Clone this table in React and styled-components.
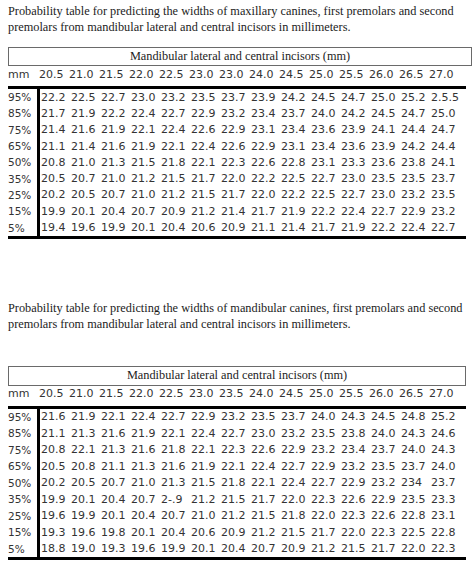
import React from "react";
import styled, { createGlobalStyle } from "styled-components";

const GlobalStyle = createGlobalStyle`
  html, body {
    margin: 0;
    padding: 0;
    background: #fff;
  }
`;

const Page = styled.div`
  width: 474px;
  height: 566px;
  overflow: hidden;
  padding: 0 0 0 8px;
  box-sizing: border-box;
`;

const Caption = styled.p`
  margin: 0;
  padding-top: ${(props) => props.top}px;
  font-family: "Liberation Serif", "Times New Roman", serif;
  font-size: 12.3px;
  line-height: 16px;
  color: #1c1c1c;
  white-space: nowrap;
`;

const TableWrap = styled.div`
  margin-top: ${(props) => props.top}px;
  width: 458px;
`;

const HeadBox = styled.div`
  width: ${(props) => props.boxWidth}px;
  height: ${(props) => props.boxHeight}px;
  box-sizing: border-box;
  border: 1px solid #6a6a6a;
  display: flex;
  align-items: center;
  justify-content: center;
  font-family: "Liberation Serif", "Times New Roman", serif;
  font-size: 12.3px;
  color: #1c1c1c;
`;

const ColumnRow = styled.div`
  display: grid;
  grid-template-columns: 31px repeat(14, 30px);
  height: 16px;
  align-items: center;
  font-family: "DejaVu Sans", Verdana, sans-serif;
  font-size: 11px;
  color: #333;
`;

const Body = styled.div`
  margin-top: ${(props) => props.gap}px;
  display: grid;
  grid-template-columns: 29px 1fr;
  border-top: 3px solid #000;
  border-bottom: 3px solid #000;
`;

const Labels = styled.div`
  display: flex;
  flex-direction: column;
`;

const Values = styled.div`
  border-left: 3px solid #000;
  padding-left: 1px;
  display: flex;
  flex-direction: column;
`;

const DataRow = styled.div`
  display: grid;
  grid-template-columns: repeat(14, 30px);
  height: ${(props) => props.rowHeight}px;
  align-items: center;
`;

const Cell = styled.span`
  font-family: "DejaVu Sans", Verdana, sans-serif;
  font-size: 11px;
  color: #333;
  white-space: nowrap;
`;

const Label = styled(Cell)`
  height: ${(props) => props.rowHeight}px;
  display: flex;
  align-items: center;
  font-size: 10.5px;
`;

const headers = [
  "20.5", "21.0", "21.5", "22.0", "22.5", "23.0", "23.0",
  "24.0", "24.5", "25.0", "25.5", "26.0", "26.5", "27.0",
];
const headers2 = [
  "20.5", "21.0", "21.5", "22.0", "22.5", "23.0", "23.5",
  "24.0", "24.5", "25.0", "25.5", "26.0", "26.5", "27.0",
];

const levels = ["95%", "85%", "75%", "65%", "50%", "35%", "25%", "15%", "5%"];

const maxillary = [
  "22.2 22.5 22.7 23.0 23.2 23.5 23.7 23.9 24.2 24.5 24.7 25.0 25.2 2.5.5",
  "21.7 21.9 22.2 22.4 22.7 22.9 23.2 23.4 23.7 24.0 24.2 24.5 24.7 25.0",
  "21.4 21.6 21.9 22.1 22.4 22.6 22.9 23.1 23.4 23.6 23.9 24.1 24.4 24.7",
  "21.1 21.4 21.6 21.9 22.1 22.4 22.6 22.9 23.1 23.4 23.6 23.9 24.2 24.4",
  "20.8 21.0 21.3 21.5 21.8 22.1 22.3 22.6 22.8 23.1 23.3 23.6 23.8 24.1",
  "20.5 20.7 21.0 21.2 21.5 21.7 22.0 22.2 22.5 22.7 23.0 23.5 23.5 23.7",
  "20.2 20.5 20.7 21.0 21.2 21.5 21.7 22.0 22.2 22.5 22.7 23.0 23.2 23.5",
  "19.9 20.1 20.4 20.7 20.9 21.2 21.4 21.7 21.9 22.2 22.4 22.7 22.9 23.2",
  "19.4 19.6 19.9 20.1 20.4 20.6 20.9 21.1 21.4 21.7 21.9 22.2 22.4 22.7",
];

const mandibular = [
  "21.6 21.9 22.1 22.4 22.7 22.9 23.2 23.5 23.7 24.0 24.3 24.5 24.8 25.2",
  "21.1 21.3 21.6 21.9 22.1 22.4 22.7 23.0 23.2 23.5 23.8 24.0 24.3 24.6",
  "20.8 22.1 21.3 21.6 21.8 22.1 22.3 22.6 22.9 23.2 23.4 23.7 24.0 24.3",
  "20.5 20.8 21.1 21.3 21.6 21.9 22.1 22.4 22.7 22.9 23.2 23.5 23.7 24.0",
  "20.2 20.5 20.7 21.0 21.3 21.5 21.8 22.1 22.4 22.7 22.9 23.2 234 23.7",
  "19.9 20.1 20.4 20.7 2-.9 21.2 21.5 21.7 22.0 22.3 22.6 22.9 23.5 23.3",
  "19.6 19.9 20.1 20.4 20.7 21.0 21.2 21.5 21.8 22.0 22.3 22.6 22.8 23.1",
  "19.3 19.6 19.8 20.1 20.4 20.6 20.9 21.2 21.5 21.7 22.0 22.3 22.5 22.8",
  "18.8 19.0 19.3 19.6 19.9 20.1 20.4 20.7 20.9 21.2 21.5 21.7 22.0 22.3",
];

function ProbTable({ top, boxWidth, boxHeight, cols, rows, gap, rowHeight }) {
  return (
    <TableWrap top={top}>
      <HeadBox boxWidth={boxWidth} boxHeight={boxHeight}>
        Mandibular lateral and central incisors (mm)
      </HeadBox>
      <ColumnRow>
        <span>mm</span>
        {cols.map((c, i) => (
          <span key={i}>{c}</span>
        ))}
      </ColumnRow>
      <Body gap={gap}>
        <Labels>
          {levels.map((l) => (
            <Label key={l} rowHeight={rowHeight}>
              {l}
            </Label>
          ))}
        </Labels>
        <Values>
          {rows.map((r, i) => (
            <DataRow key={i} rowHeight={rowHeight}>
              {r.split(" ").map((v, j) => (
                <Cell key={j}>{v}</Cell>
              ))}
            </DataRow>
          ))}
        </Values>
      </Body>
    </TableWrap>
  );
}

function App() {
  return (
    <Page>
      <GlobalStyle />
      <Caption top={3}>
        Probability table for predicting the widths of maxillary canines, first premolars and second
        <br />
        premolars from mandibular lateral and central incisors in millimeters.
      </Caption>
      <ProbTable
        top={12}
        boxWidth={464}
        boxHeight={19}
        cols={headers}
        rows={maxillary}
        gap={4}
        rowHeight={16.3}
      />
      <Caption top={61}>
        Probability table for predicting the widths of mandibular canines, first premolars and second
        <br />
        premolars from mandibular lateral and central incisors in millimeters.
      </Caption>
      <ProbTable
        top={34}
        boxWidth={458}
        boxHeight={20}
        cols={headers2}
        rows={mandibular}
        gap={4}
        rowHeight={16.5}
      />
    </Page>
  );
}

export default App;
